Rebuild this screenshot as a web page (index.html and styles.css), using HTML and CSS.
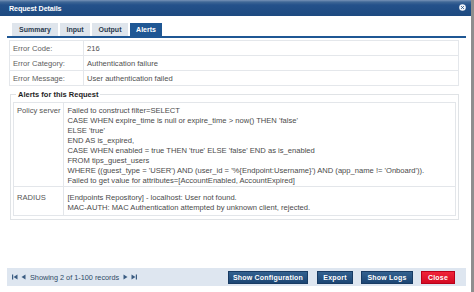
FILE: index.html
```html
<!DOCTYPE html>
<html>
<head>
<meta charset="utf-8">
<link rel="stylesheet" href="styles.css">
</head>
<body>
<div class="window">
  <div class="titlebar">
    <span class="title">Request Details</span>
    <span class="close-x"><svg width="7" height="7" viewBox="0 0 7 7"><circle cx="3.5" cy="3.5" r="3.3" fill="#f2f5f9"/><path d="M2.2 2.2 L4.8 4.8 M4.8 2.2 L2.2 4.8" stroke="#2a5283" stroke-width="1"/></svg></span>
  </div>
  <div class="tabs">
    <div class="tab t-summary">Summary</div>
    <div class="tab t-input">Input</div>
    <div class="tab t-output">Output</div>
    <div class="tab t-alerts active">Alerts</div>
  </div>
  <div class="body">
    <table class="info">
      <tr><td class="lbl">Error Code:</td><td>216</td></tr>
      <tr><td class="lbl">Error Category:</td><td>Authentication failure</td></tr>
      <tr><td class="lbl">Error Message:</td><td>User authentication failed</td></tr>
    </table>
    <fieldset class="alerts">
      <legend>Alerts for this Request</legend>
      <table class="alert-table">
        <tr class="r-policy">
          <td class="src">Policy server</td>
          <td>Failed to construct filter=SELECT<br>
CASE WHEN expire_time is null or expire_time &gt; now() THEN 'false'<br>
ELSE 'true'<br>
END AS is_expired,<br>
CASE WHEN enabled = true THEN 'true' ELSE 'false' END as is_enabled<br>
FROM tips_guest_users<br>
WHERE ((guest_type = 'USER') AND (user_id = '%{Endpoint:Username}') AND (app_name != 'Onboard')).<br>
Failed to get value for attributes=[AccountEnabled, AccountExpired]</td>
        </tr>
        <tr class="r-radius">
          <td class="src">RADIUS</td>
          <td>[Endpoints Repository] - localhost: User not found.<br>
MAC-AUTH: MAC Authentication attempted by unknown client, rejected.</td>
        </tr>
      </table>
    </fieldset>
  </div>
  <div class="footer">
    <div class="pager">
      <svg class="pg" width="6" height="6" viewBox="0 0 6 6"><rect x="0" y="0.5" width="1.2" height="5" fill="#3b5c82"/><path d="M5.5 0.5 L1.5 3 L5.5 5.5Z" fill="#3b5c82"/></svg>
      <svg class="pg" width="5" height="6" viewBox="0 0 5 6"><path d="M4.5 0.5 L0.5 3 L4.5 5.5Z" fill="#3b5c82"/></svg>
      <span class="pg-text">Showing 2 of 1-100 records</span>
      <svg class="pg" width="5" height="6" viewBox="0 0 5 6"><path d="M0.5 0.5 L4.5 3 L0.5 5.5Z" fill="#3b5c82"/></svg>
      <svg class="pg" width="6" height="6" viewBox="0 0 6 6"><path d="M0.5 0.5 L4.5 3 L0.5 5.5Z" fill="#3b5c82"/><rect x="4.8" y="0.5" width="1.2" height="5" fill="#3b5c82"/></svg>
    </div>
    <div class="buttons">
      <button class="btn b-config">Show Configuration</button>
      <button class="btn b-export">Export</button>
      <button class="btn b-logs">Show Logs</button>
      <button class="btn red b-close">Close</button>
    </div>
  </div>
</div>
</body>
</html>
```
FILE: styles.css
```css
html, body {
  margin: 0;
  padding: 0;
}
body {
  width: 474px;
  height: 292px;
  background: #8e8e8e;
  font-family: "Liberation Sans", Arial, sans-serif;
  overflow: hidden;
}
.window {
  width: 471px;
  height: 292px;
  background: #ffffff;
  display: flex;
  flex-direction: column;
}
.titlebar {
  height: 16px;
  background: linear-gradient(#7893b8 0px, #3f6796 2px, #24518a 5px, #1d4a80 16px);
  display: flex;
  align-items: center;
  justify-content: space-between;
  padding: 0 5px 0 9px;
}
.title {
  color: #ffffff;
  font-weight: bold;
  font-size: 7.2px;
  letter-spacing: -0.1px;
}
.close-x {
  display: flex;
  margin-top: -2px;
}
.tabs {
  display: flex;
  gap: 2px;
  margin: 7px 5px 0 7px;
  padding-left: 5px;
  border-bottom: 2px solid #1f5794;
}
.tab {
  height: 13px;
  line-height: 14px;
  font-size: 7px;
  font-weight: bold;
  color: #2b3b4e;
  background: #dfe5ec;
  text-align: center;
}
.t-summary { width: 46px; }
.t-input { width: 30px; }
.t-output { width: 36px; }
.t-alerts { width: 32px; }
.tab.active {
  background: #1f5794;
  color: #ffffff;
}
.body {
  padding: 2px 12px 0 9px;
  height: 228px;
}
table {
  border-collapse: collapse;
}
.info {
  width: 450px;
  font-size: 7.6px;
  color: #4f4f4f;
}
.info td {
  border: 1px solid #e4e7eb;
  height: 14px;
  padding: 0 0 0 3px;
  vertical-align: middle;
}
.info td.lbl {
  width: 70px;
  color: #5e5e5e;
}
.alerts {
  margin: 4px 0 0 1px;
  padding: 0 2px 3px 2px;
  border: 1px solid #e0e3e6;
}
.alerts legend {
  font-size: 7.5px;
  font-weight: bold;
  color: #1e1e1e;
  padding: 0 2px;
  margin-left: 3px;
  line-height: 9px;
}
.alert-table {
  width: 443px;
  margin-top: 3px;
  font-size: 7.6px;
  color: #4a4a4a;
  line-height: 10px;
}
.alert-table td {
  border: 1px solid #e3e6ea;
  vertical-align: top;
  padding: 3px 3px 0 3px;
  white-space: nowrap;
}
.alert-table td.src {
  width: 42px;
  color: #555;
}
.r-radius td {
  padding-top: 6px;
  padding-bottom: 2px;
}
.footer {
  margin: 0 5px 0 7px;
  height: 18px;
  background: #dee6f0;
  display: flex;
  align-items: center;
  justify-content: space-between;
  padding: 0 11px 0 5px;
}
.pager {
  display: flex;
  align-items: center;
  gap: 3px;
}
.pg-text {
  font-size: 7.3px;
  color: #2f4a66;
  margin: 0 1px;
}
.buttons {
  display: flex;
  gap: 8px;
}
.btn {
  height: 13px;
  padding: 0;
  border: 1px solid #183b63;
  background: linear-gradient(#33618f, #1c4573);
  color: #ffffff;
  font-family: "Liberation Sans", Arial, sans-serif;
  font-weight: bold;
  font-size: 7px;
  letter-spacing: 0.2px;
  line-height: 11px;
  text-align: center;
}
.b-config { width: 80px; }
.b-export { width: 36px; margin-left: 1px; }
.b-logs { width: 52px; }
.b-close { width: 34px; }
.btn.red {
  border-color: #b8001a;
  background: linear-gradient(#f0233a, #d40a22);
}
```
